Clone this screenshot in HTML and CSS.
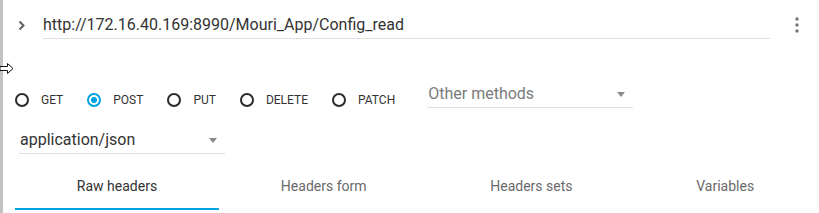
FILE: index.html
```html
<!DOCTYPE html>
<html lang="en">
<head>
    <meta charset="UTF-8">
    <title>Request editor</title>
    <link rel="stylesheet" href="styles.css">
</head>
<body>
    <div class="request-panel">
        <div class="url-row">
            <span class="toggle-icon">
                <svg width="24" height="24" viewBox="0 0 24 24"><path d="M9.5 8.5 L13.5 12.5 L9.5 16.5" fill="none" stroke="#616161" stroke-width="2"/></svg>
            </span>
            <div class="url-field">http://172.16.40.169:8990/Mouri_App/Config_read</div>
            <span class="menu-icon">
                <svg width="24" height="24" viewBox="0 0 24 24" fill="#757575"><circle cx="12" cy="6" r="1.7"/><circle cx="12" cy="12" r="1.7"/><circle cx="12" cy="18" r="1.7"/></svg>
            </span>
        </div>

        <div class="method-row">
            <div class="radio-group">
                <label class="radio"><span class="radio-circle"></span>GET</label>
                <label class="radio"><span class="radio-circle checked"></span>POST</label>
                <label class="radio"><span class="radio-circle"></span>PUT</label>
                <label class="radio"><span class="radio-circle"></span>DELETE</label>
                <label class="radio"><span class="radio-circle"></span>PATCH</label>
            </div>
            <div class="dropdown other-methods">
                <span class="dropdown-text placeholder">Other methods</span>
                <span class="dropdown-arrow"></span>
            </div>
        </div>

        <div class="dropdown content-type">
            <span class="dropdown-text">application/json</span>
            <span class="dropdown-arrow"></span>
        </div>

        <div class="tabs">
            <div class="tab selected">Raw headers</div>
            <div class="tab">Headers form</div>
            <div class="tab">Headers sets</div>
            <div class="tab">Variables</div>
        </div>

        <svg class="cursor" width="14" height="12" viewBox="0 0 14 12"><path d="M0 3.5 H7.5 V0.5 L13 5.5 L7.5 10.5 V7.5 H0 Z" fill="#fff" stroke="#111" stroke-width="1"/></svg>
    </div>
</body>
</html>
```

FILE: styles.css
```css
body {
    margin: 0;
    font-family: Roboto, "Noto Sans", sans-serif;
    background-color: #fff;
    color: #333;
}

.request-panel {
    position: relative;
    border-left: 3px solid #c2c2c2;
    min-height: 213px;
    box-sizing: border-box;
}

.url-row {
    display: flex;
    align-items: center;
    padding: 8px 10px 0 7px;
}

.toggle-icon,
.menu-icon {
    width: 24px;
    height: 24px;
    display: flex;
    margin-top: 3px;
}

.url-field {
    flex: 1;
    margin-left: 9px;
    margin-right: 15px;
    padding: 7px 0 3px;
    font-size: 16px;
    line-height: 20px;
    border-bottom: 1px solid #e0e0e0;
    white-space: nowrap;
}

.method-row {
    display: flex;
    align-items: flex-start;
    margin-top: 45px;
    margin-left: 12px;
}

.radio-group {
    display: flex;
    align-items: center;
    margin-top: 9px;
}

.radio {
    display: flex;
    align-items: center;
    font-size: 12px;
    line-height: 14px;
    color: #333;
    margin-right: 24px;
}

.radio-circle {
    width: 14px;
    height: 14px;
    box-sizing: border-box;
    border: 2px solid #2b2b2b;
    border-radius: 50%;
    margin-right: 12px;
    display: flex;
    align-items: center;
    justify-content: center;
}

.radio-circle.checked {
    border-color: #00a2df;
}

.radio-circle.checked::after {
    content: "";
    width: 6px;
    height: 6px;
    border-radius: 50%;
    background-color: #00a2df;
}

.dropdown {
    display: flex;
    align-items: center;
    width: 206px;
    box-sizing: border-box;
    padding: 0 8px 3px 1px;
    border-bottom: 1px solid #e0e0e0;
    font-size: 16px;
    line-height: 20px;
}

.other-methods {
    margin-left: 8px;
}

.dropdown-text {
    flex: 1;
}

.placeholder {
    color: #7a7a7a;
}

.dropdown-arrow {
    width: 0;
    height: 0;
    border-left: 4.5px solid transparent;
    border-right: 4.5px solid transparent;
    border-top: 5px solid #8a8a8a;
}

.content-type {
    margin-top: 22px;
    margin-left: 16px;
}

.tabs {
    display: flex;
    height: 48px;
    margin: 8px 3px 0 12px;
}

.tab {
    flex: 1 1 auto;
    display: flex;
    align-items: center;
    justify-content: center;
    font-size: 14px;
    color: #6a6a6a;
    box-sizing: border-box;
    border-bottom: 2px solid transparent;
    padding-top: 2px;
}

.tab.selected {
    color: #333;
    border-bottom-color: #00a2df;
}

.cursor {
    position: absolute;
    left: -3px;
    top: 63px;
}
```
